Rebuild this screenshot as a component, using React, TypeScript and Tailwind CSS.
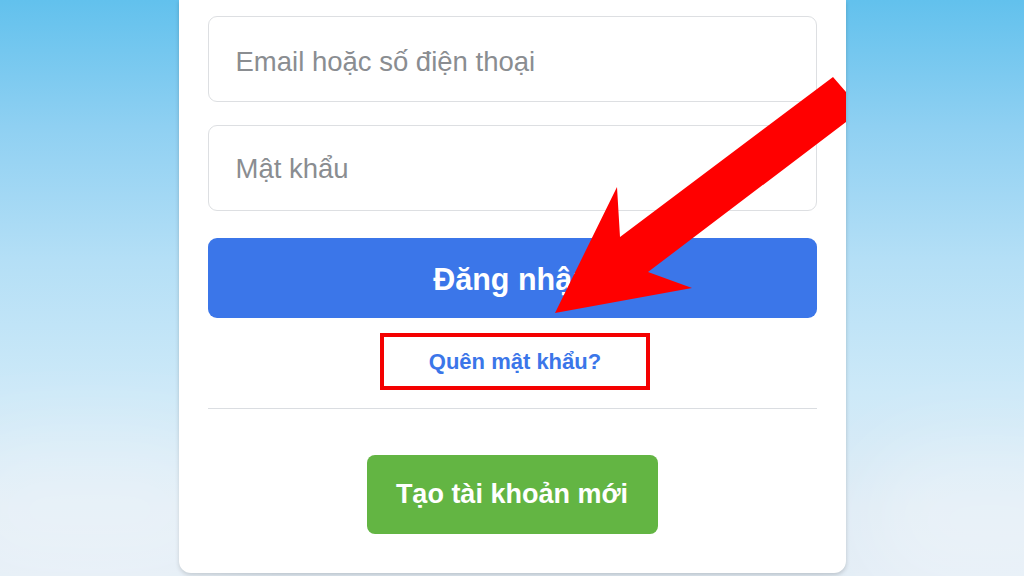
export default function App() {
  const font = { fontFamily: '"Liberation Sans", Arial, sans-serif' };
  return (
    <div
      className="relative w-[1024px] h-[576px] overflow-hidden bg-[linear-gradient(180deg,#62c1ed_0%,#8fd0f2_22%,#b4dff6_45%,#cde9f8_68%,#deebf5_88%,#e3edf6_100%)]"
      style={font}
    >
      {/* soft clouds */}
      <div className="absolute left-[-60px] top-[430px] w-[300px] h-[160px] rounded-full bg-white/30 blur-2xl" />
      <div className="absolute left-[860px] top-[440px] w-[260px] h-[160px] rounded-full bg-white/30 blur-2xl" />

      <div className="flex justify-center">
        <div className="w-[667px] h-[573px] bg-white rounded-b-[12px] shadow-[0_2px_4px_rgba(0,0,0,0.18)] px-[29px] pt-[16px] flex flex-col">
          <div className="h-[86px] rounded-[9px] border border-[#dddfe2] flex items-center pl-[27px] pt-[5px] text-[27.5px] text-[#8a8d91]">
            Email hoặc số điện thoại
          </div>
          <div className="mt-[23px] h-[86px] rounded-[9px] border border-[#dddfe2] flex items-center pl-[27px] pt-[1px] text-[27.5px] text-[#8a8d91]">
            Mật khẩu
          </div>
          <div className="mt-[27px] h-[80px] rounded-[9px] bg-[#3b76e9] flex items-center justify-center pt-[4px] text-white font-bold text-[30.5px]">
            Đăng nhập
          </div>
          <div className="mt-[15px] flex justify-center">
            <div className="ml-[6px] w-[270px] h-[57px] border-[4px] border-[#f40000] flex items-center justify-center text-[#3b76e9] font-bold text-[22px]">
              Quên mật khẩu?
            </div>
          </div>
          <div className="mt-[18px] h-px bg-[#dadde1]" />
          <div className="mt-[46px] flex justify-center">
            <div className="w-[291px] h-[79px] rounded-[8px] bg-[#63b543] flex items-center justify-center text-white font-bold text-[27px]">
              Tạo tài khoản mới
            </div>
          </div>
        </div>
      </div>

      {/* red arrow */}
      <svg className="absolute inset-0" width="1024" height="576" viewBox="0 0 1024 576">
        <polygon
          points="555,313 617,187 620,237 833,77 846,92 846,122 648,272 692,288"
          fill="#ff0000"
        />
      </svg>
    </div>
  );
}
